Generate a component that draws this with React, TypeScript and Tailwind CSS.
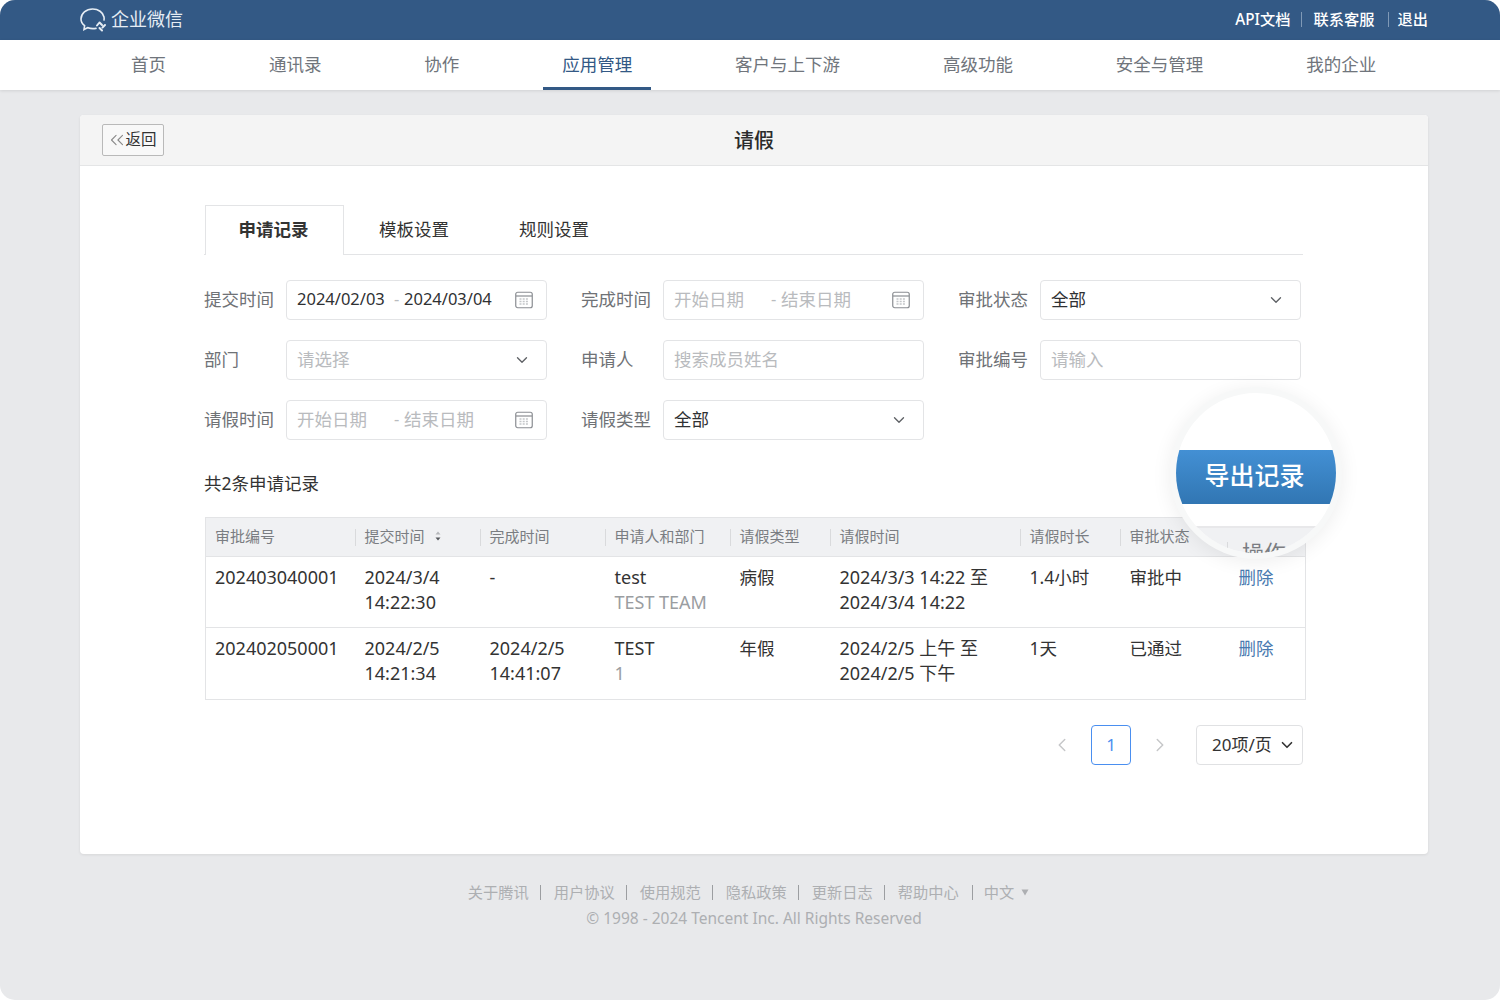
import { ChevronDown, ChevronLeft, ChevronRight, ChevronsLeft } from "lucide-react";
import type { ReactNode } from "react";

const navItems = ["首页", "通讯录", "协作", "应用管理", "客户与上下游", "高级功能", "安全与管理", "我的企业"];
const footerLinks = ["关于腾讯", "用户协议", "使用规范", "隐私政策", "更新日志", "帮助中心"];

// last column's title is covered by the magnifier in the picture
const columns = [
  { title: "审批编号", width: "w-[150px]" },
  { title: "提交时间", width: "w-[125px]", sort: true },
  { title: "完成时间", width: "w-[125px]" },
  { title: "申请人和部门", width: "w-[125px]" },
  { title: "请假类型", width: "w-[100px]" },
  { title: "请假时间", width: "w-[190px]" },
  { title: "请假时长", width: "w-[100px]" },
  { title: "审批状态", width: "w-[110px]" },
  { title: "", width: "w-[75px]" },
];

const rows = [
  {
    id: "202403040001",
    submit: ["2024/3/4", "14:22:30"],
    done: ["-"],
    person: "test",
    dept: "TEST TEAM",
    type: "病假",
    range: ["2024/3/3 14:22 至", "2024/3/4 14:22"],
    length: "1.4小时",
    status: "审批中",
  },
  {
    id: "202402050001",
    submit: ["2024/2/5", "14:21:34"],
    done: ["2024/2/5", "14:41:07"],
    person: "TEST",
    dept: "1",
    type: "年假",
    range: ["2024/2/5 上午 至", "2024/2/5 下午"],
    length: "1天",
    status: "已通过",
  },
];

// Bubble logo in the top bar
const Logo = () => (
  <svg width="28" height="26" viewBox="0 0 28 26" fill="none" stroke="#e6edf4" strokeWidth="1.6">
    <path d="M8 20.5 L4 22.5 L4.6 18.6 C2.2 16.8 1 14.6 1 12 C1 6.6 6.2 2 12.6 2 C18.4 2 23 5.4 24 10 C24.2 11 24.2 12 24 13" strokeLinecap="round" />
    <path d="M8 20.8 C10 21.6 13 21.9 16 21.4" strokeLinecap="round" />
    <path d="M19.5 15.5 L22 18 M25 18 L22.5 20.5 M22 23.5 L19.5 21 M17 18.5 L19 16" strokeWidth="2" strokeLinecap="round" />
  </svg>
);

const CalendarIcon = () => (
  <svg width="18" height="18" viewBox="0 0 18 18" fill="none" className="shrink-0">
    <rect x="0.75" y="1.25" width="16.5" height="15.5" rx="2" stroke="#8a8d92" strokeWidth="1.2" />
    <path d="M1 5 H17" stroke="#8a8d92" strokeWidth="1.2" />
    <path d="M4.5 8 H13.5 M4.5 10.5 H13.5 M4.5 13 H13.5" stroke="#c4c6c9" strokeWidth="1.3" strokeDasharray="2 1.2" />
  </svg>
);

const Field = ({ label, children }: { label: string; children: ReactNode }) => (
  <div className="flex items-center">
    <div className="w-[82px] shrink-0 whitespace-nowrap pb-[2px] text-[17.5px] text-[#6f7276]">{label}</div>
    {children}
  </div>
);

const boxClass =
  "flex h-10 w-[261px] shrink-0 items-center rounded-[4px] border border-[#e3e4e6] bg-white pb-px pl-[10px] text-[17.5px]";

const DateBox = ({ from, to, empty }: { from: string; to: string; empty?: boolean }) => (
  <div className={boxClass}>
    <span className={`w-[88px] whitespace-nowrap ${empty ? "text-[#b9bbbe]" : "text-[16.5px] text-[#2f3133]"}`}>{from}</span>
    <span className="w-[19px] pl-[9px] text-[16.5px] text-[#b9bbbe]">-</span>
    <span className={`w-[88px] whitespace-nowrap ${empty ? "text-[#b9bbbe]" : "text-[16.5px] text-[#2f3133]"}`}>{to}</span>
    <span className="ml-auto mr-[13px]">
      <CalendarIcon />
    </span>
  </div>
);

const SelectBox = ({ value, placeholder }: { value: string; placeholder?: boolean }) => (
  <div className={`${boxClass} ${placeholder ? "border-[#d8d9db] text-[#b9bbbe]" : "text-[#2f3133]"}`}>
    {value}
    <ChevronDown className="ml-auto mr-[15px] h-[18px] w-[18px] text-[#5f6266]" strokeWidth={1.8} />
  </div>
);

const TextBox = ({ placeholder }: { placeholder: string }) => (
  <div className={`${boxClass} text-[#b9bbbe]`}>{placeholder}</div>
);

export default function App() {
  return (
    <div className="bg-white font-['Noto_Sans','Noto_Sans_CJK_SC',sans-serif]">
      <div className="relative h-[1000px] w-[1500px] overflow-hidden rounded-[15px] bg-[#e8e9eb]">
        <header className="flex h-10 items-center justify-between bg-[#335985] pl-20 pr-[72px] text-white">
          <div className="flex items-center gap-[3px] pb-px text-[18px] text-[#e6edf4]">
            <Logo />
            企业微信
          </div>
          <div className="flex items-center pb-px text-[15.25px] font-medium">
            API文档
            <span className="ml-[10px] mr-[12px] h-[15px] w-px bg-[#7f99b6]" />
            联系客服
            <span className="ml-[13px] mr-[9px] h-[15px] w-px bg-[#7f99b6]" />
            退出
          </div>
        </header>

        <nav className="flex h-[50px] items-stretch gap-[64.9px] bg-white pl-[112px] shadow-[0_1px_3px_rgba(0,0,0,0.1)]">
          {navItems.map((item) => (
            <div
              key={item}
              className={`flex items-center border-b-[3px] px-[19px] pt-[2px] text-[17.5px] ${
                item === "应用管理" ? "border-[#335985] text-[#335985]" : "border-transparent text-[#70757c]"
              }`}
            >
              {item}
            </div>
          ))}
        </nav>

        <main className="ml-20 mt-[25px] h-[739px] w-[1348px] rounded-[4px] bg-white shadow-[0_1px_3px_rgba(0,0,0,0.08)]">
          <div className="relative flex h-[51px] items-center justify-center rounded-t-[4px] border-b border-[#e4e5e6] bg-[#f4f4f4]">
            <button className="absolute left-[22px] top-[9px] flex h-8 w-[62px] items-center justify-center rounded-[2px] border-[1.5px] border-[#b9b9b9] bg-[#f8f8f8] text-[15.5px] text-[#333]">
              <ChevronsLeft className="-mx-[3px] h-[22px] w-[22px] text-[#8a8a8a]" strokeWidth={1.2} />
              返回
            </button>
            <span className="pt-px text-[20px] font-medium text-[#2b2b2b]">请假</span>
          </div>

          <div className="pl-[124px] pt-[39px]">
            <div className="flex h-[50px] w-[1099px] border-b border-[#e3e4e6] text-[17.5px] text-[#333]">
              <div className="ml-px flex h-[50px] w-[139px] items-center justify-center border border-b-0 border-[#e3e4e6] bg-white pb-[2px] pr-[2px] font-bold">
                申请记录
              </div>
              <div className="flex w-[140px] items-center justify-center">模板设置</div>
              <div className="flex w-[140px] items-center justify-center">规则设置</div>
            </div>

            <div className="mt-[25px] grid w-[1100px] grid-cols-[342px_342px_342px] gap-x-[35px] gap-y-5">
              <Field label="提交时间">
                <DateBox from="2024/02/03" to="2024/03/04" />
              </Field>
              <Field label="完成时间">
                <DateBox from="开始日期" to="结束日期" empty />
              </Field>
              <Field label="审批状态">
                <SelectBox value="全部" />
              </Field>
              <Field label="部门">
                <SelectBox value="请选择" placeholder />
              </Field>
              <Field label="申请人">
                <TextBox placeholder="搜索成员姓名" />
              </Field>
              <Field label="审批编号">
                <TextBox placeholder="请输入" />
              </Field>
              <Field label="请假时间">
                <DateBox from="开始日期" to="结束日期" empty />
              </Field>
              <Field label="请假类型">
                <SelectBox value="全部" />
              </Field>
            </div>

            <div className="mt-[30px] h-[26px] text-[17.5px] leading-[26px] text-[#333]">共2条申请记录</div>

            <table className="ml-px mt-[21px] w-[1100px] table-fixed border border-[#e3e4e6] text-left text-[17.5px] text-[#333]">
              <thead>
                <tr className="h-[39px] bg-[#f0f1f3] text-[15px] text-[#7a7d82]">
                  {columns.map((col, i) => (
                    <th key={i} className={`${col.width} p-0 font-normal`}>
                      <div className={`flex h-[17px] items-center pb-[2px] pl-[9px] ${i > 0 ? "-ml-px border-l border-[#d9dadc]" : ""}`}>
                        {col.title}
                        {col.sort && (
                          <svg width="8" height="12" viewBox="0 0 8 12" className="ml-[9px]">
                            <path d="M4 1.5 L6.5 4.5 H1.5 Z" fill="#b5b7ba" />
                            <path d="M4 10.5 L6.5 7.5 H1.5 Z" fill="#55585c" />
                          </svg>
                        )}
                      </div>
                    </th>
                  ))}
                </tr>
              </thead>
              <tbody>
                {rows.map((row, r) => (
                  <tr
                    key={row.id}
                    className={`border-t border-[#e3e4e6] align-top leading-[25px] ${r === 0 ? "h-[71px]" : "h-[72px]"}`}
                  >
                    <td className="pl-[9px] pt-2 text-[18px]">{row.id}</td>
                    <td className="pl-[9px] pt-2 text-[18px]">
                      {row.submit.map((t) => (
                        <div key={t}>{t}</div>
                      ))}
                    </td>
                    <td className="pl-[9px] pt-2 text-[18px]">
                      {row.done.map((t) => (
                        <div key={t}>{t}</div>
                      ))}
                    </td>
                    <td className="pl-[9px] pt-2 text-[18px]">
                      <div>{row.person}</div>
                      <div className="text-[#9a9da1]">{row.dept}</div>
                    </td>
                    <td className="pl-[9px] pt-2">{row.type}</td>
                    <td className="pl-[9px] pt-2 text-[18px]">
                      {row.range.map((t) => (
                        <div key={t}>{t}</div>
                      ))}
                    </td>
                    <td className="pl-[9px] pt-2">{row.length}</td>
                    <td className="pl-[9px] pt-2">{row.status}</td>
                    <td className="pl-[8px] pt-2 text-[#4a7ab0]">删除</td>
                  </tr>
                ))}
              </tbody>
            </table>

            <div className="mt-[25px] flex w-[1099px] items-center justify-end">
              <ChevronLeft className="h-[22px] w-[22px] text-[#c6c7c9]" strokeWidth={1.6} />
              <div className="ml-[18px] flex h-10 w-10 items-center justify-center rounded-[4px] border-[1.5px] border-[#4a8ff0] text-[17px] text-[#4a8ff0]">
                1
              </div>
              <ChevronRight className="ml-[18px] h-[22px] w-[22px] text-[#c6c7c9]" strokeWidth={1.6} />
              <div className="ml-[25px] flex h-10 w-[107px] items-center rounded-[4px] border border-[#e0e1e3] pl-[15px] text-[17px] text-[#333]">
                20项/页
                <ChevronDown className="ml-[6px] h-[18px] w-[18px] text-[#333]" strokeWidth={2.2} />
              </div>
            </div>
          </div>
        </main>

        <footer className="ml-20 mt-[25px] w-[1348px] text-center text-[15.25px] leading-[26px] text-[#adafb2]">
          <div className="flex justify-center pr-[11px]">
            {footerLinks.map((link, i) => (
              <span key={link} className="flex items-center">
                {link}
                <span className={`h-[15px] w-px bg-[#9c9ea1] ${i === 5 ? "ml-[13px] mr-[11px]" : "ml-[11px] mr-[13px]"}`} />
              </span>
            ))}
            <span className="flex items-center">
              中文
              <svg width="8" height="7" viewBox="0 0 8 7" className="ml-[7px]">
                <path d="M0.5 0.5 H7.5 L4 6.5 Z" fill="#adafb2" />
              </svg>
            </span>
          </div>
          <div className="text-[15.5px]">© 1998 - 2024 Tencent Inc. All Rights Reserved</div>
        </footer>

        {/* magnifier over the export button */}
        <div className="absolute left-[1170px] top-[387px] h-[172px] w-[172px] overflow-hidden rounded-full border-[6px] border-[#f7f8f8] bg-white shadow-[0_3px_20px_rgba(0,0,0,0.07)]">
          <div className="-ml-[10px] mt-[57px] flex h-[54px] w-[177px] items-start justify-center bg-gradient-to-b from-[#4390d4] to-[#3176b3] pt-[7px] text-[25px] font-medium leading-[36px] text-white">
            导出记录
          </div>
          <div className="mt-[22px] flex h-[40px] items-start border-t-2 border-[#e8e8ea] bg-[#f0f1f3] pl-[51px]">
            <span className="mt-[14px] h-[20px] w-px bg-[#d9dadc]" />
            <span className="ml-[14px] text-[22px] leading-[48px] text-[#7a7d82]">操作</span>
          </div>
        </div>
      </div>
    </div>
  );
}
